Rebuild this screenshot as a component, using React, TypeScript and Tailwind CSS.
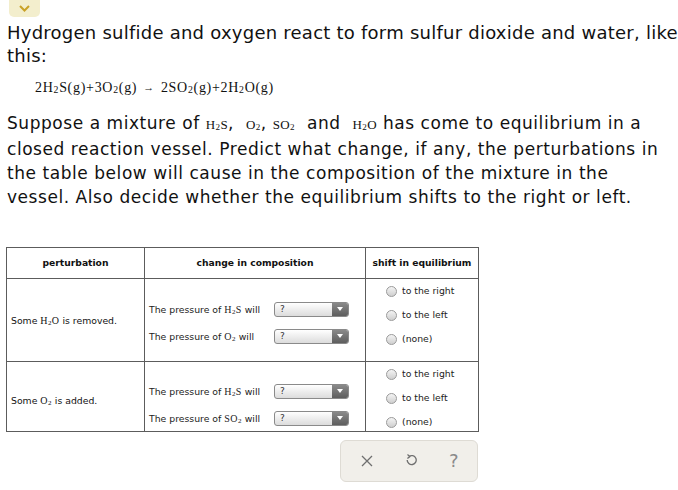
import React from 'react';

const Sub = ({ children }: { children: React.ReactNode }) => (
  <sub className="text-[0.7em] relative top-[0.15em] align-baseline">{children}</sub>
);

// little serif chemistry formula, like the inline ones in the question
const Chem = ({ children, size = 'text-[13px]' }: { children: React.ReactNode; size?: string }) => (
  <span className={`font-['Liberation_Serif',serif] tracking-[0.4px] ${size}`}>{children}</span>
);

const Dropdown = () => (
  <div className="w-[75px] h-[15px] rounded-[3px] border border-[#8a8a8a] flex overflow-hidden bg-gradient-to-b from-white to-[#dcdcdc]">
    <div className="flex-1 text-[9px] leading-[13px] pl-[5px] text-[#333]">?</div>
    <div className="w-[16px] bg-gradient-to-b from-[#8a8a8a] to-[#5e5e5e] flex items-center justify-center">
      <svg width="6" height="5" viewBox="0 0 6 5">
        <path d="M0 0 L6 0 L3 4 Z" fill="#fff" />
      </svg>
    </div>
  </div>
);

const Radio = ({ label }: { label: string }) => (
  <div className="flex items-center h-[24px]">
    <span className="w-[11px] h-[11px] rounded-full border border-[#9a9a9a] bg-gradient-to-b from-[#f4f4f4] to-[#cfcfcf] mr-[5px]" />
    <span className="text-[9.3px] text-[#222]">{label}</span>
  </div>
);

const PressureRow = ({ what }: { what: React.ReactNode }) => (
  <div className="flex items-center h-[27px]">
    <span className="w-[125px] text-[9.3px] text-[#222]">The pressure of {what} will</span>
    <Dropdown />
  </div>
);

export default function App() {
  return (
    <div className="w-[678px] h-[490px] bg-white overflow-hidden font-['DejaVu_Sans',sans-serif] text-[#111]">
      <div className="ml-[9px] w-[31px] h-[17px] rounded-b-[5px] bg-[#f3eecd] flex items-center justify-center">
        <svg width="11" height="7" viewBox="0 0 11 7">
          <path d="M1 1 L5.5 5.5 L10 1" stroke="#c9a227" strokeWidth="2" fill="none" />
        </svg>
      </div>

      <p className="mt-[4px] px-[7px] text-[18px] leading-[23px] tracking-[0.24px] whitespace-nowrap">
        Hydrogen sulfide and oxygen react to form sulfur dioxide and water, like
        <br />
        this:
      </p>

      <div className="mt-[10px] ml-[35px] h-[20px] flex items-center font-['Liberation_Serif',serif] text-[14px] tracking-[0.7px]">
        <span>
          2H<Sub>2</Sub>S(g)+3O<Sub>2</Sub>(g)
        </span>
        <span className="mx-[6px] text-[11px]">→</span>
        <span>
          2SO<Sub>2</Sub>(g)+2H<Sub>2</Sub>O(g)
        </span>
      </div>

      <p className="mt-[14px] px-[7px] text-[17px] leading-[24px] tracking-[0.55px] whitespace-nowrap">
        Suppose a mixture of <Chem>H<Sub>2</Sub>S</Chem>,&nbsp; <Chem>O<Sub>2</Sub></Chem>, <Chem>SO<Sub>2</Sub></Chem>
        &nbsp; and&nbsp; <Chem>H<Sub>2</Sub>O</Chem> has come to equilibrium in a
        <br />
        closed reaction vessel. Predict what change, if any, the perturbations in
        <br />
        the table below will cause in the composition of the mixture in the
        <br />
        vessel. Also decide whether the equilibrium shifts to the right or left.
      </p>

      <div className="mt-[38px] ml-[6px] w-[473px] border border-[#5c5c5c]">
        <div className="flex h-[31px] border-b border-[#5c5c5c] text-[9.2px] font-bold">
          <div className="w-[137px] flex items-center justify-center">perturbation</div>
          <div className="w-[221px] border-l border-[#5c5c5c] flex items-center justify-center">
            change in composition
          </div>
          <div className="flex-1 border-l border-[#5c5c5c] flex items-center justify-center">
            shift in equilibrium
          </div>
        </div>

        <div className="flex h-[83px] border-b border-[#5c5c5c]">
          <div className="w-[137px] flex items-center pl-[4px] text-[9.3px]">
            <span>
              Some <Chem size="text-[10px]">H<Sub>2</Sub>O</Chem> is removed.
            </span>
          </div>
          <div className="w-[221px] border-l border-[#5c5c5c] pl-[4px] pt-[17px]">
            <PressureRow what={<Chem size="text-[10px]">H<Sub>2</Sub>S</Chem>} />
            <PressureRow what={<Chem size="text-[10px]">O<Sub>2</Sub></Chem>} />
          </div>
          <div className="flex-1 border-l border-[#5c5c5c] pl-[20px]">
            <Radio label="to the right" />
            <Radio label="to the left" />
            <Radio label="(none)" />
          </div>
        </div>

        <div className="flex h-[69px]">
          <div className="w-[137px] flex items-center pl-[4px] pt-[7px] text-[9.3px]">
            <span>
              Some <Chem size="text-[10px]">O<Sub>2</Sub></Chem> is added.
            </span>
          </div>
          <div className="w-[221px] border-l border-[#5c5c5c] pl-[4px] pt-[16px]">
            <PressureRow what={<Chem size="text-[10px]">H<Sub>2</Sub>S</Chem>} />
            <PressureRow what={<Chem size="text-[10px]">SO<Sub>2</Sub></Chem>} />
          </div>
          <div className="flex-1 border-l border-[#5c5c5c] pl-[20px]">
            <Radio label="to the right" />
            <Radio label="to the left" />
            <Radio label="(none)" />
          </div>
        </div>
      </div>

      <div className="mt-[8px] ml-[340px] w-[138px] h-[42px] rounded-[6px] border border-[#dedbd4] bg-[#f1efea] flex items-center pl-[20px] gap-[32px]">
        <svg width="12" height="12" viewBox="0 0 12 12">
          <path d="M1 1 L11 11 M11 1 L1 11" stroke="#6f6f6f" strokeWidth="1.3" />
        </svg>
        <svg width="12" height="14" viewBox="0 0 12 14">
          <path d="M4 2.5 A4.5 4.5 0 1 1 2.2 6" stroke="#6f6f6f" strokeWidth="1.3" fill="none" />
          <path d="M2.5 0.5 L4.8 2.6 L2.4 4.4" stroke="#6f6f6f" strokeWidth="1.3" fill="none" />
        </svg>
        <span className="text-[18px] text-[#8a8a8a] leading-none">?</span>
      </div>
    </div>
  );
}
